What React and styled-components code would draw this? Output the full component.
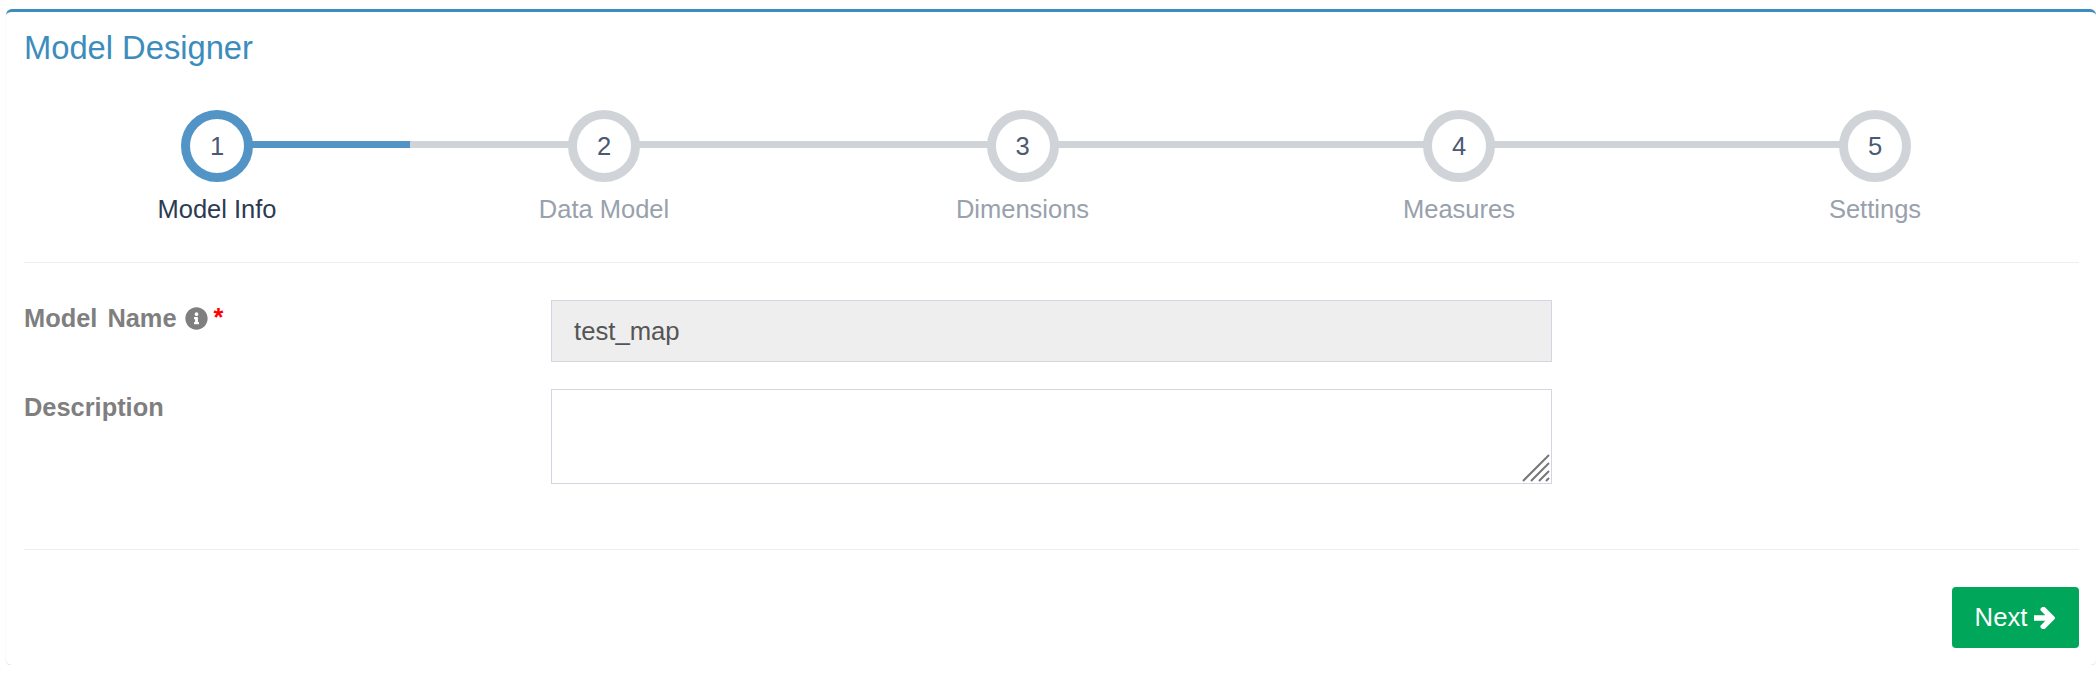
import React from "react";
import styled, { createGlobalStyle } from "styled-components";
import { FaInfoCircle } from "react-icons/fa";

const Global = createGlobalStyle`
  html, body { margin: 0; padding: 0; background: #fff; }
  body { font-family: "Liberation Sans", Arial, sans-serif; }
`;

const Card = styled.section`
  box-sizing: border-box;
  margin: 9px 0 0 6px;
  height: 656px;
  padding: 0 17px 0 18px;
  background: #fff;
  border-top: 3px solid #3c8dbc;
  border-radius: 6px;
  box-shadow: 0 0 2px rgba(0, 0, 0, 0.07), 0 2px 2px -1px rgba(0, 0, 0, 0.14);
`;

const Title = styled.h3`
  margin: 0;
  padding-top: 15px;
  height: 74px;
  box-sizing: border-box;
  font-size: 32.7px;
  line-height: 42px;
  font-weight: 400;
  color: #3c8dbc;
`;

const Stepper = styled.ol`
  list-style: none;
  margin: 0;
  padding: 24px 0 0;
  height: 177px;
  box-sizing: border-box;
  display: grid;
  grid-template-columns: 386fr 388fr 449fr 424fr 408fr;
  border-bottom: 1px solid #eeeeee;
`;

const Step = styled.li`
  position: relative;
  display: flex;
  flex-direction: column;
  align-items: center;

  &::before,
  &::after {
    content: "";
    position: absolute;
    top: 31px;
    height: 7px;
    width: 50%;
    background: #d0d4d9;
  }
  &::before {
    left: 0;
    display: ${(p) => (p.$first ? "none" : "block")};
  }
  &::after {
    left: 50%;
    display: ${(p) => (p.$last ? "none" : "block")};
    background: ${(p) => (p.$active ? "#5294c5" : "#d0d4d9")};
  }
`;

const Circle = styled.span`
  position: relative;
  z-index: 1;
  box-sizing: border-box;
  width: 72px;
  height: 72px;
  border-radius: 50%;
  border: 9px solid ${(p) => (p.$active ? "#5294c5" : "#d0d4d9")};
  background: #fff;
  display: flex;
  align-items: center;
  justify-content: center;
  font-size: 25.6px;
  color: #4a5a72;
`;

const StepLabel = styled.span`
  margin-top: 12px;
  font-size: 25.5px;
  line-height: 30px;
  color: ${(p) => (p.$active ? "#2c3b52" : "#98a1ac")};
`;

const Form = styled.form`
  padding-top: 37px;
  height: 287px;
  box-sizing: border-box;
  border-bottom: 1px solid #eeeeee;
  display: flex;
  flex-direction: column;
  gap: 27px;
`;

const Row = styled.div`
  display: grid;
  grid-template-columns: 527px 1001px;
`;

const Label = styled.label`
  display: flex;
  align-items: center;
  height: 36px;
  font-size: 25.4px;
  word-spacing: 3px;
  font-weight: 700;
  color: #7f7f7f;
`;

const InfoIcon = styled(FaInfoCircle)`
  flex: none;
  width: 23px;
  height: 23px;
  margin-left: 8px;
  color: #7f7f7f;
`;

const Required = styled.span`
  color: #f00;
  margin-left: 6px;
  margin-top: -2px;
`;

const Input = styled.input`
  box-sizing: border-box;
  width: 100%;
  height: 62px;
  padding: 0 22px;
  border: 1px solid #d2d6de;
  background: #eeeeee;
  font: 25.7px "Liberation Sans", Arial, sans-serif;
  color: #555;
  outline: none;
`;

const AreaWrap = styled.div`
  position: relative;
  height: 95px;
`;

const Area = styled.textarea`
  display: block;
  box-sizing: border-box;
  width: 100%;
  height: 95px;
  border: 1px solid #d2d6de;
  background: #fff;
  resize: none;
  outline: none;
`;

const Grip = styled.svg`
  position: absolute;
  right: 2px;
  bottom: 2px;
  width: 28px;
  height: 28px;
`;

const Footer = styled.div`
  display: flex;
  justify-content: flex-end;
  padding-top: 37px;
`;

const NextButton = styled.button`
  box-sizing: border-box;
  width: 127px;
  height: 61px;
  display: flex;
  align-items: center;
  justify-content: center;
  gap: 7px;
  padding: 0 1px 0 0;
  background: #00a65a;
  border: 0;
  border-radius: 4px;
  color: #fff;
  font: 25.7px "Liberation Sans", Arial, sans-serif;
`;

const Arrow = styled.svg`
  width: 21px;
  height: 22px;
  fill: currentColor;
`;

const steps = ["Model Info", "Data Model", "Dimensions", "Measures", "Settings"];

export default function App() {
  return (
    <>
      <Global />
      <Card>
        <Title>Model Designer</Title>
        <Stepper>
          {steps.map((s, i) => (
            <Step key={s} $active={i === 0} $first={i === 0} $last={i === steps.length - 1}>
              <Circle $active={i === 0}>{i + 1}</Circle>
              <StepLabel $active={i === 0}>{s}</StepLabel>
            </Step>
          ))}
        </Stepper>
        <Form>
          <Row>
            <Label>
              Model Name
              <InfoIcon />
              <Required>*</Required>
            </Label>
            <Input disabled value="test_map" readOnly />
          </Row>
          <Row>
            <Label>Description</Label>
            <AreaWrap>
              <Area />
              <Grip viewBox="0 0 28 28" fill="none" stroke="#777" strokeWidth="2">
                <path d="M1 27 L27 1 M9 27 L27 9 M17 27 L27 17 M24 27 L27 24" />
              </Grip>
            </AreaWrap>
          </Row>
        </Form>
        <Footer>
          <NextButton type="button">
            Next
            <Arrow viewBox="192 218 1408 1484" preserveAspectRatio="none">
              <path d="M1600 960q0 54-37 91l-651 651q-39 37-91 37-51 0-90-37l-75-75q-38-38-38-91t38-91l293-293h-704q-52 0-84.5-37.5t-32.5-90.5v-128q0-53 32.5-90.5t84.5-37.5h704l-293-294q-38-36-38-90t38-90l75-75q38-38 90-38 53 0 91 38l651 651q37 35 37 90z" />
            </Arrow>
          </NextButton>
        </Footer>
      </Card>
    </>
  );
}
